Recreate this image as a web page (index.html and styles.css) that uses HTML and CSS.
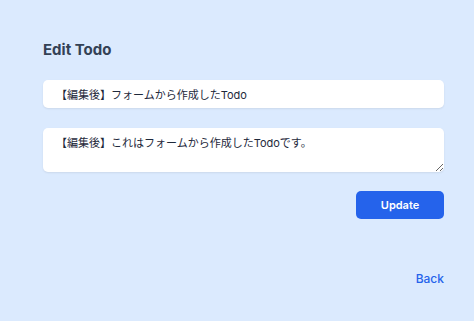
FILE: index.html
```html
<!DOCTYPE html>
<html lang="ja">
<head>
<meta charset="utf-8">
<link rel="stylesheet" href="styles.css">
</head>
<body>
<div class="page">
  <h1 class="title">Edit Todo</h1>
  <form class="form">
    <input class="field" type="text" value="【編集後】フォームから作成したTodo">
    <textarea class="field area">【編集後】これはフォームから作成したTodoです。</textarea>
    <div class="actions"><button class="btn" type="button">Update</button></div>
  </form>
  <div class="back-row"><a class="back" href="#">Back</a></div>
</div>
</body>
</html>
```
FILE: styles.css
```css
html, body { margin: 0; padding: 0; }
body {
  background: #dbeafe;
  font-family: Inter, "Noto Sans CJK JP", sans-serif;
  width: 474px; height: 321px; overflow: hidden;
}
.page { padding: 38px 30px 0 43px; display: flex; flex-direction: column; }
.title { margin: 0; font-size: 15px; font-weight: 700; color: #334155; line-height: 24px; }
.form { display: flex; flex-direction: column; margin-top: 18px; }
.field {
  box-sizing: border-box; width: 401px; border: none; border-radius: 5px;
  background: #fff; font-family: Inter, "Noto Sans CJK JP", sans-serif;
  font-size: 11px; color: #1e293b; padding: 0 13px; height: 28px;
  box-shadow: 0 1px 2px rgba(0,0,0,0.08); outline: none;
}
.area { height: 44px; margin-top: 20px; padding: 6px 13px; resize: vertical; line-height: 18px; display: block; }
.actions { display: flex; justify-content: flex-end; width: 401px; margin-top: 19px; }
.btn {
  width: 88px; height: 28px; border: none; border-radius: 5px; background: #2563eb;
  color: #fff; font-family: Inter, sans-serif; font-weight: 600; font-size: 11px;
}
.back-row { display: flex; justify-content: flex-end; width: 401px; margin-top: 52px; }
.back { color: #2563eb; text-decoration: none; font-size: 12px; font-weight: 500; line-height: 16px; }
```
